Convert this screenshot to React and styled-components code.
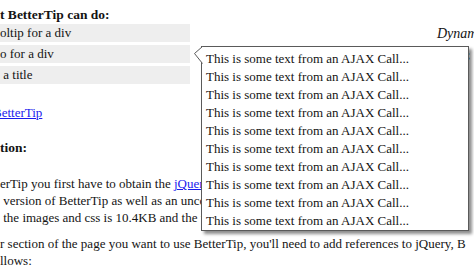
import React from "react";
import styled, { createGlobalStyle } from "styled-components";

const GlobalStyle = createGlobalStyle`
  html, body {
    margin: 0;
    padding: 0;
    background: #ffffff;
  }
  body {
    font-family: "Liberation Serif", "Times New Roman", serif;
    color: #141414;
    overflow: hidden;
  }
`;

const AJAX_LINES = Array.from({ length: 10 }, () => "This is some text from an AJAX Call...");

export default function App() {
  return (
    <>
      <GlobalStyle />
      <Page>
        <Heading>t BetterTip can do:</Heading>
        <FeatureTable>
          <FeatureRow>
            <FeatureCell>oltip for a div</FeatureCell>
            <SideCell>
              <em>Dynamic</em>
            </SideCell>
          </FeatureRow>
          <FeatureRow>
            <FeatureCell>o for a div</FeatureCell>
            <SideCell $shift>
              <b>;</b>
            </SideCell>
          </FeatureRow>
          <FeatureRow>
            <FeatureCell>&nbsp;a title</FeatureCell>
            <SideCell $shift>:</SideCell>
          </FeatureRow>
        </FeatureTable>

        <LinkLine>
          <PageLink href="#" $clip>
            BetterTip
          </PageLink>
        </LinkLine>

        <SectionTitle>tion:</SectionTitle>

        <Paragraph>
          <Line>
            erTip you first have to obtain the <PageLink href="#">jQuery</PageLink> library,
            version 1.2.
          </Line>
          <Line>&nbsp;version of BetterTip as well as an uncompressed version. The file ar</Line>
          <Line>&nbsp;the images and css is 10.4KB and the uncompressed version is 18KB.</Line>
        </Paragraph>

        <Paragraph>
          <Line>
            r section of the page you want to use BetterTip, you'll need to add references to
            jQuery, B
          </Line>
          <Line>llows:</Line>
        </Paragraph>

        <Tooltip>
          <TipArrow width="10" height="19" viewBox="0 0 10 19">
            <path d="M9.5 0.5 L1.5 7.5 L9.5 17.5" fill="#ffffff" stroke="#5a5a5a" strokeWidth="1" />
          </TipArrow>
          {AJAX_LINES.map((text, i) => (
            <TipLine key={i}>{text}</TipLine>
          ))}
        </Tooltip>
      </Page>
    </>
  );
}

const Page = styled.div`
  position: relative;
  width: 474px;
  height: 274px;
  overflow: hidden;
  font-size: 13px;
  line-height: 17px;
`;

const Heading = styled.div`
  font-weight: bold;
  font-size: 13.5px;
  padding-top: 6px;
  white-space: nowrap;
`;

const FeatureTable = styled.div`
  display: flex;
  flex-direction: column;
  gap: 3px;
  margin-top: 1px;
`;

const FeatureRow = styled.div`
  display: flex;
  align-items: flex-end;
  height: 18px;
`;

const FeatureCell = styled.div`
  width: 190px;
  height: 100%;
  background: #eeeeee;
  white-space: pre;
  line-height: 18px;
`;

const SideCell = styled.div`
  flex: 1;
  padding-left: ${(p) => (p.$shift ? "276px" : "247px")};
  white-space: nowrap;
  overflow: hidden;

  em {
    font-style: italic;
    font-size: 14px;
  }
`;

const LinkLine = styled.div`
  margin-top: 20px;
  white-space: nowrap;
`;

const PageLink = styled.a`
  color: #1a1aee;
  text-decoration: underline;
  margin-left: ${(p) => (p.$clip ? "-7px" : "0")};
`;

const SectionTitle = styled.div`
  font-weight: bold;
  font-size: 13.5px;
  margin-top: 18px;
  white-space: nowrap;
`;

const Paragraph = styled.div`
  margin-top: 19px;

  & + & {
    margin-top: 9px;
  }
`;

const Line = styled.div`
  white-space: nowrap;
`;

const Tooltip = styled.div`
  position: absolute;
  left: 201px;
  top: 46px;
  width: 258px;
  padding: 3px 4px 0 4px;
  height: 180px;
  background: #ffffff;
  border: 1px solid #5a5a5a;
  box-shadow: 3px 3px 3px rgba(0, 0, 0, 0.45);
`;

const TipArrow = styled.svg`
  position: absolute;
  left: -9px;
  top: -1px;
  display: block;
`;

const TipLine = styled.div`
  font-size: 13px;
  line-height: 18px;
  white-space: nowrap;
`;
